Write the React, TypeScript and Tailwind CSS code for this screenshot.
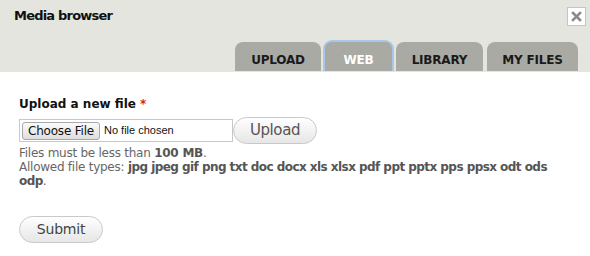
const tabs = [
  { label: "UPLOAD", width: "w-[86px]", active: false },
  { label: "WEB", width: "w-[67px]", active: true },
  { label: "LIBRARY", width: "w-[87px]", active: false },
  { label: "MY FILES", width: "w-[91px]", active: false },
];

const fileTypes = "jpg jpeg gif png txt doc docx xls xlsx pdf ppt pptx pps ppsx odt ods odp";

export default function App() {
  return (
    <div className="h-[256px] w-[590px] overflow-hidden bg-white font-['DejaVu_Sans',sans-serif]">
      {/* title bar + tabs */}
      <div className="h-[72px] bg-[#e5e5df]">
        <div className="flex items-start justify-between pl-[14px] pr-[4px] pt-[8px]">
          <h1 className="text-[13px] font-bold leading-[16px] tracking-[-0.8px] text-[#111]">Media browser</h1>
          <button className="-mt-[1px] flex h-[19px] w-[19px] items-center justify-center border border-[#c4c4c0] bg-white">
            <svg width="11" height="11" viewBox="0 0 11 11">
              <path d="M2 2 L9 9 M9 2 L2 9" stroke="#8a8a88" strokeWidth="2.6" strokeLinecap="square" />
            </svg>
          </button>
        </div>
        <div className="mt-[16px] flex items-end gap-[4px] pl-[235px]">
          {tabs.map((tab) =>
            tab.active ? (
              <div
                key={tab.label}
                className="-mx-[2px] -mt-[3px] rounded-t-[9px] border-[2px] border-b-0 border-[#a9c8e8] bg-[#aaaaa5]"
              >
                <div
                  className={`flex h-[29px] ${tab.width} items-center justify-center rounded-t-[7px] bg-[#aaaaa5] pt-[6px] text-[12px] font-bold tracking-[-0.2px] text-white`}
                >
                  {tab.label}
                </div>
              </div>
            ) : (
              <div
                key={tab.label}
                className={`flex h-[29px] ${tab.width} items-center justify-center rounded-t-[8px] bg-[#aaaaa5] pt-[6px] text-[12px] font-bold tracking-[-0.2px] text-[#1a1a1a]`}
              >
                {tab.label}
              </div>
            )
          )}
        </div>
      </div>

      {/* form */}
      <div className="px-[19px] pt-[24px]">
        <label className="block text-[12px] font-bold leading-[16px] text-[#111]">
          Upload a new file <span className="text-[#e02020]">*</span>
        </label>
        <div className="mt-[5px] flex items-center">
          <div className="flex h-[23px] w-[214px] items-center border border-[#c8c8c8] pl-[2px]">
            <div className="flex h-[18px] items-center rounded-[3px] border border-[#a8a8a8] bg-gradient-to-b from-[#fbfbfb] to-[#dedede] px-[5px] text-[12px] tracking-[-0.2px] text-[#111]">
              Choose File
            </div>
            <span className="ml-[4px] font-['Liberation_Sans',sans-serif] text-[11px] text-[#111]">No file chosen</span>
          </div>
          <button className="h-[27px] w-[84px] rounded-full border border-[#c9c9c9] bg-gradient-to-b from-white to-[#e6e6e6] text-[15px] tracking-[-0.4px] text-[#555]">
            Upload
          </button>
        </div>
        <div className="mt-[2px] text-[12px] leading-[14px] tracking-[-0.25px] text-[#666]">
          <p>
            Files must be less than <strong className="font-bold text-[#555]">100 MB</strong>.
          </p>
          <p>
            Allowed file types:{" "}
            <strong className="font-bold tracking-[-0.55px] text-[#555]">{fileTypes}</strong>.
          </p>
        </div>
        <button className="mt-[28px] h-[27px] w-[84px] rounded-full border border-[#c9c9c9] bg-gradient-to-b from-white to-[#e6e6e6] text-[14px] tracking-[-0.2px] text-[#444]">
          Submit
        </button>
      </div>
    </div>
  );
}
